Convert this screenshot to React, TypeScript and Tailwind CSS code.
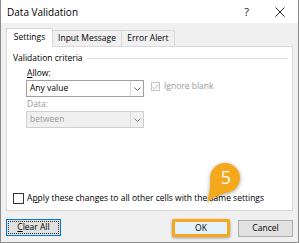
import React from "react";

const font = { fontFamily: '"Open Sans", "Noto Sans", sans-serif' };

function Chevron({ color = "#606060" }: { color?: string }) {
  return (
    <svg width="7" height="4" viewBox="0 0 7 4">
      <path d="M0.5 0.5 L3.5 3.5 L6.5 0.5" fill="none" stroke={color} strokeWidth="1" />
    </svg>
  );
}

export default function App() {
  return (
    <div
      className="relative w-[299px] h-[243px] flex flex-col bg-[#f0f0f0] border-l border-r border-b border-[#8c8c8c] text-[8.5px] text-black leading-none overflow-hidden"
      style={font}
    >
      {/* Title bar */}
      <div className="h-[23px] bg-white flex items-center pl-[6px] pr-[13px] shrink-0">
        <span className="text-[10px]">Data Validation</span>
        <div className="flex-1" />
        <span className="text-[11px] text-[#222] mr-[26px]">?</span>
        <svg width="10" height="10" viewBox="0 0 10 10">
          <path d="M0.5 0.5 L9.5 9.5 M9.5 0.5 L0.5 9.5" stroke="#222" strokeWidth="1" />
        </svg>
      </div>

      {/* Body */}
      <div className="flex-1 flex flex-col px-[5px] pt-[5px]">
        {/* Tabs */}
        <div className="flex items-end h-[18px]">
          <div className="h-[19px] w-[47px] bg-white border border-b-0 border-[#d9d9d9] flex items-center justify-center relative z-10 -mb-px pb-[1px]">
            Settings
          </div>
          <div className="h-[16px] w-[69px] border border-l-0 border-b-0 border-[#d9d9d9] flex items-center justify-center">
            Input Message
          </div>
          <div className="h-[16px] w-[53px] border border-l-0 border-b-0 border-[#d9d9d9] flex items-center justify-center">
            Error Alert
          </div>
        </div>

        {/* Panel */}
        <div className="h-[165px] bg-white border border-[#d9d9d9] flex flex-col pl-[6px] pr-[4px] pt-[5px] pb-[6px]">
          <div className="h-[12px] flex items-center">
            <span>Validation criteria</span>
            <div className="flex-1 h-px bg-[#dcdcdc] ml-[4px]" />
          </div>

          <div className="pl-[13px] flex flex-col">
            <div className="h-[12px] mt-[3px] flex items-center pl-[1px]">
              <span>
                <span className="underline">A</span>llow:
              </span>
            </div>
            <div className="flex items-start mt-[1px]">
              <div className="w-[118px] h-[17px] border border-[#a0a0a0] bg-white flex items-center">
                <span className="flex-1 pl-[3px]">Any value</span>
                <div className="w-[13px] h-full border-l border-[#dcdcdc] flex items-center justify-center">
                  <Chevron />
                </div>
              </div>
              <div className="flex items-center ml-[7px] mt-[2px]">
                <div className="w-[9px] h-[9px] border border-[#c4c4c4] bg-white flex items-center justify-center">
                  <svg width="7" height="6" viewBox="0 0 7 6">
                    <path d="M0.5 3 L2.5 5 L6.5 0.5" fill="none" stroke="#b8b8b8" strokeWidth="1" />
                  </svg>
                </div>
                <span className="ml-[4px] text-[#9a9a9a]">Ignore blank</span>
              </div>
            </div>
            <div className="h-[12px] mt-[1px] flex items-center pl-[1px] text-[#9a9a9a]">Data:</div>
            <div className="mt-[1px] w-[118px] h-[17px] border border-[#cfcfcf] bg-[#f0f0f0] flex items-center">
              <span className="flex-1 pl-[3px] text-[#9a9a9a]">between</span>
              <div className="w-[13px] h-full border-l border-[#dcdcdc] flex items-center justify-center">
                <Chevron color="#8a8a8a" />
              </div>
            </div>
          </div>

          <div className="flex-1" />

          <div className="flex items-center">
            <div className="w-[11px] h-[11px] border border-[#333] bg-white" />
            <span className="ml-[3px]">
              A<span className="underline">p</span>ply these changes to all other cells with the same settings
            </span>
          </div>
        </div>

        {/* Buttons */}
        <div className="flex items-start mt-[8px]">
          <div className="w-[55px] h-[17px] border border-[#0078d7] bg-[#e1e1e1] p-[1px]">
            <div className="w-full h-full border border-dotted border-[#333] flex items-center justify-center">
              <span>
                <span className="underline">C</span>lear All
              </span>
            </div>
          </div>
          <div className="flex-1" />
          <div className="w-[58px] h-[18px] border-[3px] border-[#f5a81c] rounded-[2px] bg-[#e5f1fb] flex items-center justify-center shadow-[0_1px_3px_rgba(0,0,0,0.35)]">
            OK
          </div>
          <div className="w-[55px] h-[17px] ml-[8px] mt-[1px] border border-[#adadad] bg-[#e1e1e1] flex items-center justify-center">
            Cancel
          </div>
        </div>
      </div>

      {/* Step marker */}
      <div className="absolute left-[199px] top-[159px] w-[46px] h-[50px]">
        <svg width="46" height="50" viewBox="0 0 46 50" className="drop-shadow-[0_1px_2px_rgba(0,0,0,0.35)]">
          <path
            d="M7 43 Q11 31 10.1 17.2 A15 15 0 1 1 30.9 32.8 Q18 35 7 43 Z"
            fill="#f5a81c"
          />
        </svg>
        <span
          className="absolute left-[17px] top-[9px] w-[18px] text-center text-[18px] text-white leading-none"
          style={font}
        >
          5
        </span>
      </div>
    </div>
  );
}
